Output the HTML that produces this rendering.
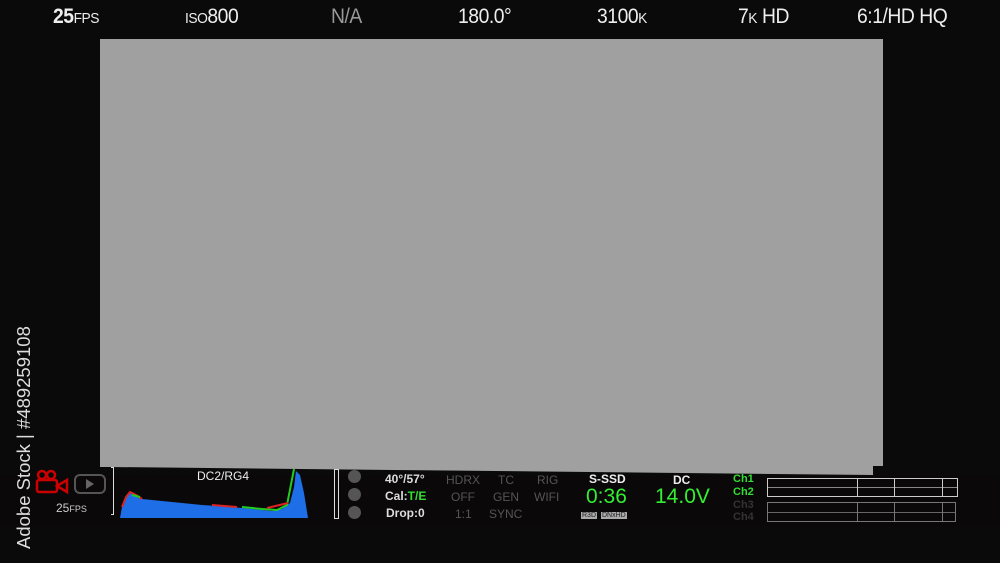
<!DOCTYPE html>
<html><head><meta charset="utf-8"><style>
*{margin:0;padding:0;box-sizing:border-box}
body{width:1000px;height:563px;background:#0b0a0a;position:relative;overflow:hidden;font-family:"Liberation Sans",sans-serif}
.t{position:absolute;top:5px;color:#eee;font-size:21px;font-family:"Liberation Sans Narrow","Liberation Sans",sans-serif;letter-spacing:-0.5px;transform:scaleX(0.92);transform-origin:left}
.t small{font-size:15px}
.a{position:absolute;font-size:12px;font-weight:bold;color:#ddd}
.g{position:absolute;font-size:12px;color:#555}
.dot{position:absolute;left:348px;width:13px;height:13px;border-radius:50%;background:#555}
</style></head><body>
<div style="position:absolute;left:100px;top:39px;width:783px;height:437px;background:#a0a0a0;clip-path:polygon(0 0,783px 0,783px 427px,773px 427px,773px 436px,10px 428px,0 428px)"></div>
<div style="position:absolute;left:0;top:476px;width:1000px;height:50px;background:#0a0808"></div>
<div class="t" style="left:53px"><b>25</b><small>FPS</small></div>
<div class="t" style="left:185px"><small>ISO</small>800</div>
<div class="t" style="left:331px;color:#999">N/A</div>
<div class="t" style="left:458px">180.0°</div>
<div class="t" style="left:597px">3100<small>K</small></div>
<div class="t" style="left:738px">7<small>K</small> HD</div>
<div class="t" style="left:857px">6:1/HD HQ</div>
<div style="position:absolute;left:13px;top:549px;transform:rotate(-90deg);transform-origin:left top;color:#ddd;font-size:18.5px;white-space:nowrap">Adobe Stock | #489259108</div>
<svg style="position:absolute;left:34px;top:468px" width="36" height="28" viewBox="0 0 36 28"><g fill="none" stroke="#c00" stroke-width="2.5"><circle cx="8" cy="7" r="4"/><circle cx="17" cy="7" r="4"/><rect x="3" y="12" width="20" height="12" rx="2"/><path d="M23 18 L33 12 V24 Z"/></g></svg>
<div style="position:absolute;left:74px;top:474px;width:32px;height:20px;border:2px solid #555;border-radius:6px"></div>
<div style="position:absolute;left:86px;top:479px;border-left:8px solid #666;border-top:5px solid transparent;border-bottom:5px solid transparent"></div>
<div style="position:absolute;left:56px;top:501px;color:#ccc;font-size:12px">25<span style="font-size:9px">FPS</span></div>
<div style="position:absolute;left:111px;top:467px;width:3px;height:48px;border:1px solid #ddd;border-left:none"></div>
<div style="position:absolute;left:112px;top:467px;width:202px;height:52px">
<svg width="202" height="52" viewBox="0 0 202 52"><path d="M8 51 L10 40 L14 30 L18 26 L24 28 L30 32 L60 35 L90 38 L120 40 L140 42 L160 44 L170 42 L178 36 L182 20 L184 4 L188 8 L192 26 L196 51 Z" fill="#1e6ee8"/><path d="M10 40 L14 30 L18 25 L24 28 L30 32" stroke="#d22" stroke-width="2" fill="none"/><path d="M20 28 L28 30" stroke="#2c2" stroke-width="2" fill="none"/><path d="M130 40 L150 42 L165 43 L175 38 L182 2" stroke="#2c2" stroke-width="2" fill="none"/><path d="M100 38 L125 40 M155 41 L176 36" stroke="#d22" stroke-width="2" fill="none"/></svg></div>
<div style="position:absolute;left:197px;top:469px;color:#eee;font-size:12px">DC2/RG4</div>
<div style="position:absolute;left:334px;top:469px;width:5px;height:50px;border:1px solid #ddd"></div>
<div class="dot" style="top:470px"></div><div class="dot" style="top:488px"></div><div class="dot" style="top:506px"></div>
<div class="a" style="left:385px;top:472px">40°/57°</div>
<div class="a" style="left:385px;top:489px">Cal:<span style="color:#3d3">T/E</span></div>
<div class="a" style="left:386px;top:506px">Drop:0</div>
<div class="g" style="left:446px;top:473px">HDRX</div><div class="g" style="left:451px;top:490px">OFF</div><div class="g" style="left:455px;top:507px">1:1</div>
<div class="g" style="left:498px;top:473px">TC</div><div class="g" style="left:493px;top:490px">GEN</div><div class="g" style="left:489px;top:507px">SYNC</div>
<div class="g" style="left:537px;top:473px">RIG</div><div class="g" style="left:534px;top:490px">WIFI</div>
<div class="a" style="left:589px;top:472px;color:#eee">S-SSD</div>
<div style="position:absolute;left:586px;top:485px;color:#3e3;font-size:21px">0:36</div>
<div style="position:absolute;left:581px;top:512px;font-size:7px;color:#222;background:#aaa;padding:0 1px">R3D</div>
<div style="position:absolute;left:601px;top:512px;font-size:7px;color:#222;background:#aaa;padding:0 1px">DNxHD</div>
<div class="a" style="left:673px;top:473px;color:#eee">DC</div>
<div style="position:absolute;left:655px;top:485px;color:#3e3;font-size:21px">14.0V</div>
<div class="a" style="left:733px;top:473px;color:#3d3;font-size:11px">Ch1</div>
<div class="a" style="left:733px;top:486px;color:#3d3;font-size:11px">Ch2</div>
<div class="a" style="left:733px;top:499px;color:#333;font-size:11px">Ch3</div>
<div class="a" style="left:733px;top:511px;color:#333;font-size:11px">Ch4</div>
<div style="position:absolute;left:767px;top:478px;width:191px;height:19px;border:1px solid #ccc"><div style="position:absolute;left:0;right:0;top:8px;border-top:1px solid #888"></div><div style="position:absolute;left:89px;top:0;bottom:0;border-left:1px solid #ccc"></div><div style="position:absolute;left:126px;top:0;bottom:0;border-left:1px solid #ccc"></div><div style="position:absolute;left:174px;top:0;bottom:0;border-left:1px solid #ccc"></div></div>
<div style="position:absolute;left:767px;top:502px;width:189px;height:20px;border:1px solid #777"><div style="position:absolute;left:0;right:0;top:9px;border-top:1px solid #666"></div><div style="position:absolute;left:89px;top:0;bottom:0;border-left:1px solid #777"></div><div style="position:absolute;left:126px;top:0;bottom:0;border-left:1px solid #777"></div><div style="position:absolute;left:174px;top:0;bottom:0;border-left:1px solid #777"></div></div>
</body></html>
